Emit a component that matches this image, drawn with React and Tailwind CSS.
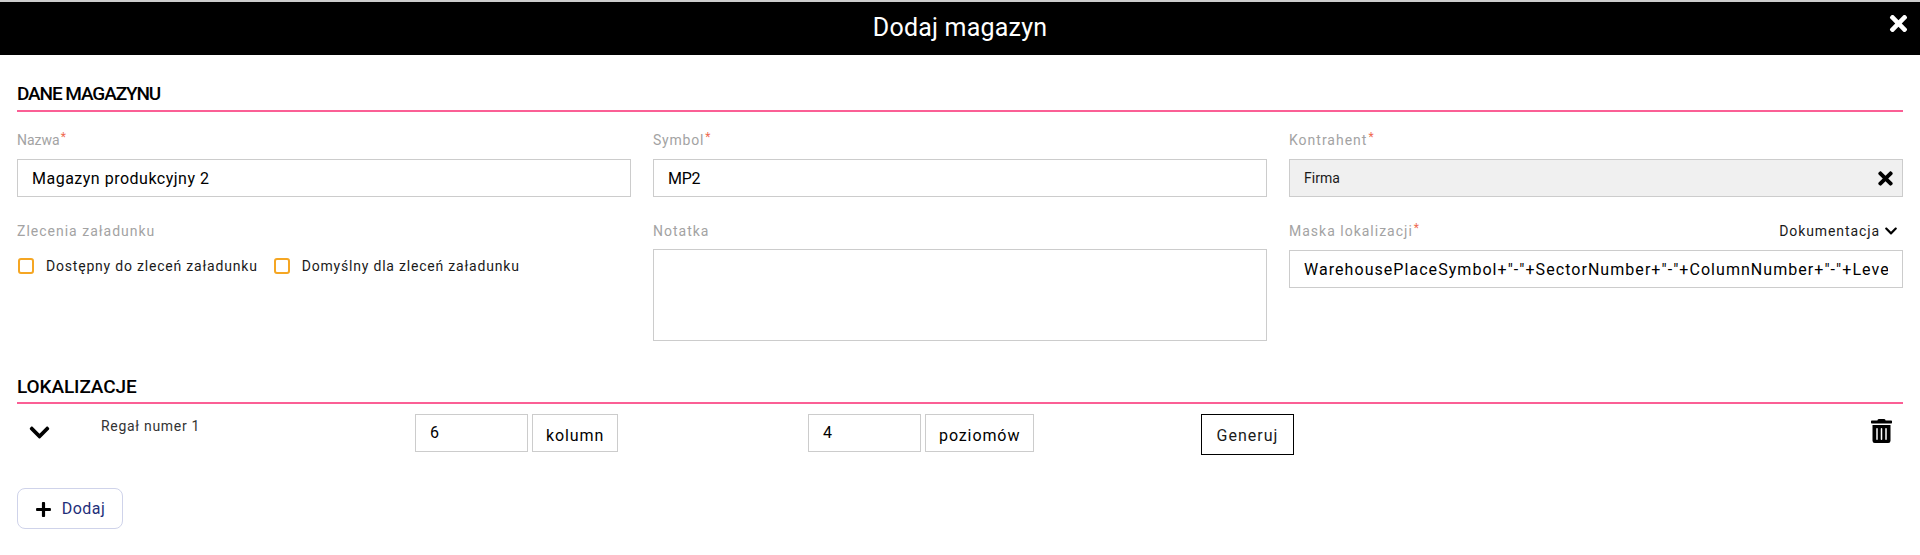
import React from "react";
import { FaTimes, FaChevronDown, FaTrashAlt, FaPlus } from "react-icons/fa";

const font = { fontFamily: '"Roboto", "Liberation Sans", sans-serif' };

function Label({ children, required, tracking = "tracking-[1px]" }) {
  return (
    <div className={`flex h-[20px] items-center text-[14px] leading-[20px] text-[#a3a3a3] ${tracking}`}>
      <span>{children}</span>
      {required && <span className="relative top-[-3px] ml-[1px] text-[12px] text-[#ef6a50]">*</span>}
    </div>
  );
}

function Input({ value, tracking = "tracking-[0.5px]" }) {
  return (
    <input
      readOnly
      value={value}
      className={`block h-[38px] w-full border border-[#cccccc] bg-white px-[14px] text-[16px] text-black outline-none ${tracking}`}
    />
  );
}

function Check({ children }) {
  return (
    <label className="flex items-center gap-[12px] text-[14px] leading-[20px] tracking-[0.8px] text-[#1a1a1a]">
      <span className="h-[16px] w-[16px] rounded-[3px] border-2 border-[#f5a623]" />
      {children}
    </label>
  );
}

function Section({ children, className }) {
  return (
    <h2 className={`border-b-2 border-[#fb5f95] pt-[1px] text-[19px] font-medium leading-[24px] text-black ${className}`}>
      {children}
    </h2>
  );
}

function Unit({ value, unit, tracking }) {
  return (
    <div className="flex w-[393px] gap-[4px]">
      <div className="flex h-[38px] w-[113px] items-center border border-[#cccccc] px-[14px] text-[16px] text-black">
        {value}
      </div>
      <div className={`flex h-[38px] items-center border border-[#cccccc] px-[13px] pt-[6px] text-[16px] text-black ${tracking}`}>
        {unit}
      </div>
    </div>
  );
}

export default function App() {
  return (
    <div className="min-h-[555px] bg-white" style={font}>
      <header className="relative flex h-[55px] items-center justify-center border-t-2 border-[#cccccc] bg-black pb-[2px] text-[25px] tracking-[0.2px] text-white">
        Dodaj magazyn
        <FaTimes className="absolute right-[9px] top-[9px] h-[25px] w-[25px] text-white" />
      </header>

      <main className="px-[17px] pt-[26px]">
        <Section className="h-[31px] tracking-[-1.1px]">DANE MAGAZYNU</Section>

        <div className="mt-[18px] grid grid-cols-3 gap-x-[22px]">
          <div>
            <Label required tracking="tracking-[0px]">Nazwa</Label>
            <div className="mt-[9px]"><Input value="Magazyn produkcyjny 2" /></div>
            <div className="mt-[24px]"><Label>Zlecenia załadunku</Label></div>
            <div className="mt-[15px] flex gap-[16px] pl-[1px]">
              <Check>Dostępny do zleceń załadunku</Check>
              <Check>Domyślny dla zleceń załadunku</Check>
            </div>
          </div>

          <div>
            <Label required tracking="tracking-[0.8px]">Symbol</Label>
            <div className="mt-[9px]"><Input value="MP2" tracking="tracking-[-0.3px]" /></div>
            <div className="mt-[24px]"><Label>Notatka</Label></div>
            <textarea
              readOnly
              className="mt-[8px] block h-[92px] w-full resize-none border border-[#cccccc] bg-white outline-none"
            />
          </div>

          <div>
            <Label required>Kontrahent</Label>
            <div className="mt-[9px] flex h-[38px] items-center justify-between border border-[#cccccc] bg-[#f0f0f0] pl-[14px] pr-[6px] text-[14px] text-[#1a1a1a]">
              Firma
              <FaTimes className="h-[21px] w-[21px] text-black" />
            </div>
            <div className="mt-[24px] flex h-[20px] items-center justify-between">
              <Label required>Maska lokalizacji</Label>
              <span className="flex items-center gap-[4px] pr-[5px] text-[14px] tracking-[0.9px] text-[#1a1a1a]">
                Dokumentacja
                <FaChevronDown className="h-[14px] w-[14px] text-black" />
              </span>
            </div>
            <div className="mt-[9px]">
              <Input tracking="tracking-[1.05px]" value={'WarehousePlaceSymbol+"-"+SectorNumber+"-"+ColumnNumber+"-"+LevelNumber'} />
            </div>
          </div>
        </div>

        <div className="mt-[33px]"><Section className="h-[30px] tracking-[-0.1px]">LOKALIZACJE</Section></div>

        <div className="mt-[10px] flex items-start">
          <div className="flex w-[84px] pl-[11px] pt-[7px]">
            <FaChevronDown className="h-[23px] w-[23px] text-black" />
          </div>
          <div className="w-[314px] pt-[2px] text-[14px] leading-[20px] tracking-[0.7px] text-[#333333]">Regał numer 1</div>
          <Unit value="6" unit="kolumn" tracking="tracking-[0.9px]" />
          <Unit value="4" unit="poziomów" tracking="tracking-[0.9px]" />
          <button className="flex h-[41px] w-[93px] items-center justify-center border-[1.5px] border-black pt-[2px] text-[16px] tracking-[1px] text-[#1a1a1a]">
            Generuj
          </button>
          <div className="flex flex-1 justify-end pr-[11px] pt-[5px]">
            <FaTrashAlt className="h-[24px] w-[21px] text-black" />
          </div>
        </div>

        <button className="mt-[33px] flex h-[41px] w-[106px] items-center justify-center gap-[10px] rounded-[8px] border border-[#cfd3ea] bg-white pt-[1px] text-[16px] tracking-[0.5px] text-[#1f2f7a]">
          <FaPlus className="h-[17px] w-[17px] text-black" />
          Dodaj
        </button>
      </main>
    </div>
  );
}
